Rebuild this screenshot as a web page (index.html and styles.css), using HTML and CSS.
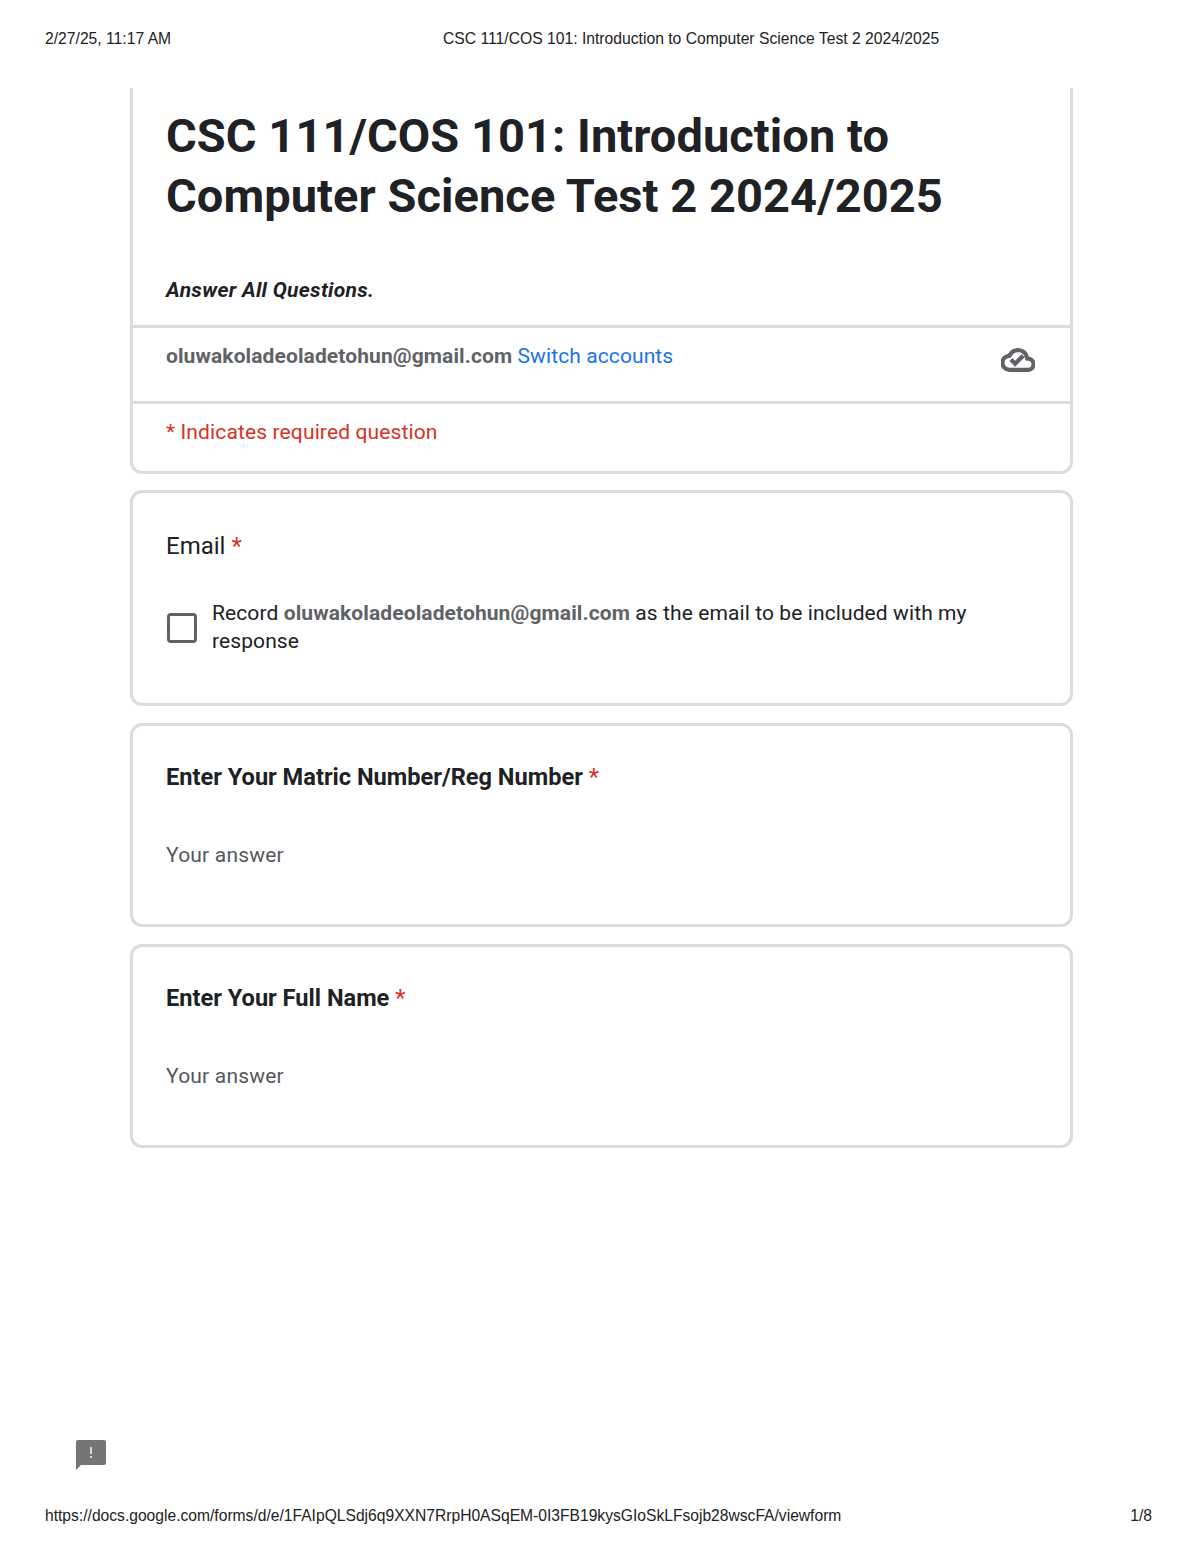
FILE: index.html
```html
<!DOCTYPE html>
<html lang="en">

<head>
    <meta charset="UTF-8">
    <meta name="viewport" content="width=device-width, initial-scale=1.0">
    <title>CSC 111/COS 101: Introduction to Computer Science Test 2 2024/2025</title>

    <link rel="stylesheet" href="styles.css">
</head>

<body>

    <div class="print-header">
        <span>2/27/25, 11:17 AM</span>
        <span class="print-title">CSC 111/COS 101: Introduction to Computer Science Test 2 2024/2025</span>
    </div>

    <div class="form">
        <div class="card card-head">
            <div class="head-top">
                <h1 class="form-title">CSC 111/COS 101: Introduction to Computer Science Test 2 2024/2025</h1>
                <div class="form-desc">Answer All Questions.</div>
            </div>
            <div class="account-row">
                <div><span class="email">oluwakoladeoladetohun@gmail.com</span> <a class="switch" href="#">Switch accounts</a></div>
                <svg class="cloud" viewBox="0 0 24 24" width="34" height="34">
                    <path fill="#5f6368" stroke="#5f6368" stroke-width="1" d="M19.35 10.04C18.67 6.59 15.64 4 12 4 9.11 4 6.6 5.64 5.35 8.04 2.34 8.36 0 10.91 0 14c0 3.31 2.69 6 6 6h13c2.76 0 5-2.24 5-5 0-2.64-2.05-4.78-4.65-4.96zM19 18H6c-2.21 0-4-1.79-4-4 0-2.05 1.53-3.76 3.56-3.97l1.07-.11.5-.95C8.08 7.14 9.94 6 12 6c2.62 0 4.88 1.86 5.39 4.43l.3 1.5 1.53.11c1.56.1 2.78 1.41 2.78 2.96 0 1.65-1.35 3-3 3zM10 13.2l-1.9-1.9-1.4 1.4 3.3 3.3 6-6-1.4-1.4z"/>
                </svg>
            </div>
            <div class="required-note">* Indicates required question</div>
        </div>

        <div class="card question email-question">
            <div class="question-label plain">Email <span class="star">*</span></div>
            <div class="record-row">
                <span class="checkbox"></span>
                <div class="record-text">Record <span class="email">oluwakoladeoladetohun@gmail.com</span> as the email to be included with my response</div>
            </div>
        </div>

        <div class="card question">
            <div class="question-label">Enter Your Matric Number/Reg Number <span class="star">*</span></div>
            <div class="answer">Your answer</div>
        </div>

        <div class="card question">
            <div class="question-label">Enter Your Full Name <span class="star">*</span></div>
            <div class="answer">Your answer</div>
        </div>
    </div>

    <svg class="report-icon" viewBox="0 0 30 30" width="30" height="30">
        <path fill="#757575" d="M2 0h26a2 2 0 0 1 2 2v21a2 2 0 0 1-2 2H5l-5 5V2a2 2 0 0 1 2-2z"/>
        <rect x="14" y="7" width="2" height="7" fill="#d8d8d8"/>
        <rect x="14" y="16" width="2" height="2" fill="#d8d8d8"/>
    </svg>

    <div class="print-footer">
        <span>https://docs.google.com/forms/d/e/1FAIpQLSdj6q9XXN7RrpH0ASqEM-0I3FB19kysGIoSkLFsojb28wscFA/viewform</span>
        <span>1/8</span>
    </div>

</body>

</html>
```

FILE: styles.css
```css
html,
body {
    margin: 0;
    height: 100%;
    background-color: #fff;
}

body {
    display: flex;
    flex-direction: column;
    height: 1553px;
    font-family: Roboto, Arial, sans-serif;
    color: #202124;
}

.print-header {
    position: relative;
    height: 88px;
    padding: 30px 45px 0;
    box-sizing: border-box;
    font-family: "Liberation Sans", Arial, sans-serif;
    font-size: 15.7px;
    line-height: 17px;
    color: #222;
}

.print-title {
    position: absolute;
    left: 443px;
    top: 30px;
}

.form {
    display: flex;
    flex-direction: column;
    gap: 17px;
    margin: 0 127px 0 130px;
}

.card {
    border: 3px solid #dadce0;
    border-radius: 12px;
    background-color: #fff;
}

.card-head {
    margin-bottom: -1px;
    border-top: none;
    border-top-left-radius: 0;
    border-top-right-radius: 0;
}

.head-top {
    padding: 18px 33px 21px;
}

.form-title {
    margin: 0;
    font-size: 47px;
    line-height: 60px;
    font-weight: 700;
    letter-spacing: 0.06px;
}

.form-desc {
    margin-top: 50px;
    font-size: 21px;
    line-height: 28px;
    letter-spacing: 0.3px;
    font-style: italic;
    font-weight: 700;
}

.account-row {
    display: flex;
    justify-content: space-between;
    height: 76px;
    padding: 14px 33px 0;
    box-sizing: border-box;
    border-top: 3px solid #dadce0;
    font-size: 21px;
    line-height: 28px;
    letter-spacing: 0.1px;
}

.email {
    font-weight: 700;
    color: #5f6368;
}

.switch {
    color: #1a73e8;
    text-decoration: none;
}

.cloud {
    margin-top: 1px;
    margin-right: 2px;
}

.required-note {
    height: 70px;
    padding: 14px 33px 0;
    box-sizing: border-box;
    border-top: 3px solid #dadce0;
    font-size: 21px;
    line-height: 28px;
    letter-spacing: 0.13px;
    color: #d93025;
}

.question {
    height: 204px;
    padding: 36px 33px 0;
    box-sizing: border-box;
}

.email-question {
    height: 216px;
    padding-top: 38px;
}

.question-label {
    font-size: 23.6px;
    line-height: 30px;
    font-weight: 700;
}

.question-label.plain {
    font-size: 24px;
    font-weight: 400;
}

.star {
    font-weight: 400;
    color: #d93025;
}

.record-row {
    display: flex;
    align-items: center;
    gap: 15px;
    margin-top: 38px;
    padding-left: 1px;
}

.checkbox {
    flex: none;
    width: 24px;
    height: 24px;
    margin-top: 2px;
    border: 3.5px solid #5f6368;
    border-radius: 4px;
    box-sizing: content-box;
}

.record-text {
    font-size: 21px;
    line-height: 28px;
    letter-spacing: 0.1px;
    width: 800px;
}

.answer {
    margin-top: 49px;
    font-size: 21px;
    line-height: 28px;
    letter-spacing: 0.2px;
    color: #54585d;
}

.report-icon {
    position: absolute;
    left: 76px;
    top: 1440px;
}

.print-footer {
    display: flex;
    justify-content: space-between;
    margin-top: auto;
    padding: 0 48px 29px 45px;
    font-family: "Liberation Sans", Arial, sans-serif;
    font-size: 15.64px;
    line-height: 17px;
    color: #222;
}
```
